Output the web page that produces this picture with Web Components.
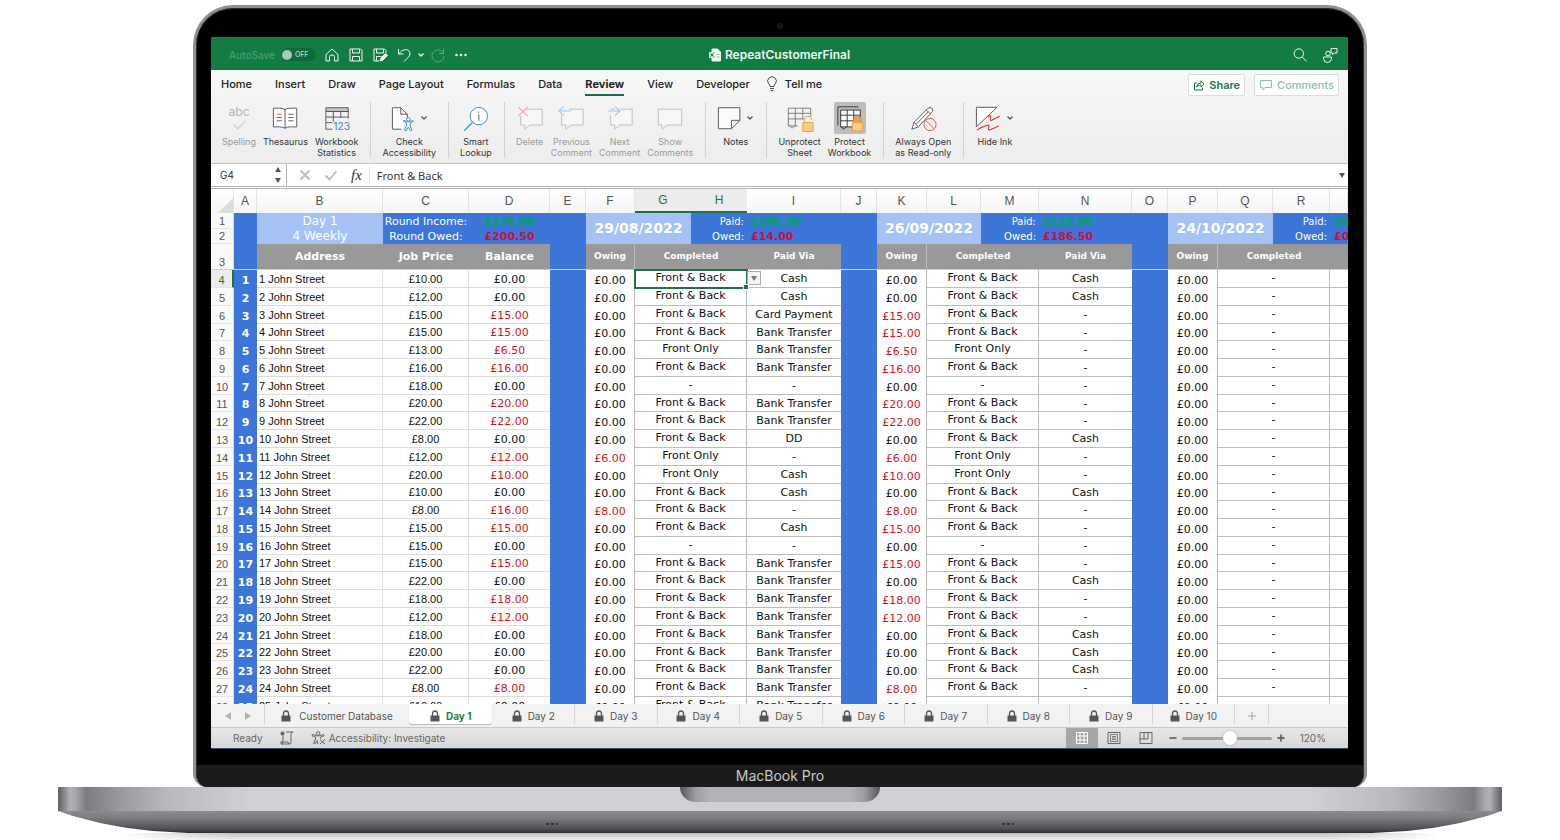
<!DOCTYPE html>
<html lang="en">
<head>
<meta charset="utf-8">
<title>RepeatCustomerFinal</title>
<style>
    body{
        margin:0;
        background-color:white;
        font-family:Inter,"Liberation Sans",sans-serif;
        overflow:hidden;
    }
</style>
</head>
<body>
<mac-book>
    <excel-window></excel-window>
</mac-book>

<script>
const ICONS={
    home:[16,16,'<path d="M2 7.500 8 2l6 5.500V14h-3.500V9.500q0-1.500-2.500-1.500t-2.500 1.500V14H2Z"/>'],
    save:[16,16,'<path d="M2 2h10.500L14 3.500V14H2ZM4.500 2v4h7V2M4.500 14V9.500h7V14"/>'],
    saveas:[16,16,'<path d="M7 14H2V2h10.500L14 3.500V6M4.500 2v4h7V2M4.500 14V9.500h5"/><path d="m8 14 .6-2.600 5-5 2 2-5 5Z" fill="currentColor"/>'],
    undo:[16,16,'<path d="M2.500 2v5h5M2.500 7Q6 2.500 9.500 2.500 14 3 14 7q-.2 2-2 3.500L8 14.500"/>'],
    redo:[16,16,'<path d="M13.500 2v4.500H9M13.500 6.500A6 6 0 1 0 14 9"/>'],
    caret:[8,8,'<path d="m1.500 2.500 2.500 2.500 2.500-2.500" stroke-width="1.400"/>'],
    dots:[14,6,'<g fill="currentColor" stroke="none"><circle cx="2.500" cy="3" r="1.300"/><circle cx="7" cy="3" r="1.300"/><circle cx="11.500" cy="3" r="1.300"/></g>'],
    file:[12,14,'<path d="M3 1h5.500L11.500 4v9H3Z" fill="currentColor"/><path d="M0 4h6v6H0Z" fill="#cfe6d8" stroke="none"/><path d="m1.500 5.500 3 3m0-3-3 3" stroke="#107c41"/><path d="M7.500 6.500h3m-3 2.500h3" stroke="#8cc3a2"/>'],
    search:[16,16,'<circle cx="6.800" cy="6.500" r="4.700"/><path d="m10.200 10 4.300 4.300"/>'],
    people:[18,18,'<circle cx="7" cy="7.500" r="2.300"/><path d="M2.500 11h8v1.500q-.5 4-4 4t-4-4Z"/><path d="M10 2.500h6V7h-2.500L11.500 8.500V7H10Z"/>'],
    bulb:[12,16,'<path d="M4 10.500Q4 9 2.700 7.800a4.300 4.300 0 1 1 6.600 0Q8 9 8 10.500ZM4 12.500h4M4.700 14.500h2.600" stroke-width=".8"/>'],
    share:[12,12,'<path d="M4 4H1.500v7h8V8.500"/><path d="M3.500 8q.5-4 4.500-4V1.800L11.200 5 8 8V6Q5 6 3.500 8Z"/>'],
    comment:[14,12,'<path d="M1.500 1.500h11v7H6L3.800 11V8.500H1.500Z"/>'],
    spelling:[28,30,'<text x="14" y="13" text-anchor="middle" font-size="13" fill="#b5b5b5" stroke="none">abc</text><path d="m8 22 4.500 4.500L21 18" stroke="#a9ddc9" stroke-width="1.200"/>'],
    book:[28,30,'<path d="M14 6Q12 4.500 8 4.500H1.500v20H8q4 0 6 1.500 2-1.500 6-1.500h6.500v-20H20q-4 0-6 1.500v20" fill="#fff"/><path d="M5 11h5.500" stroke="#e0623d"/><path d="M5 14.500h5.500M5 18h5.500M17.500 11H23m-5.500 3.500H23M17.500 18H23"/>'],
    stats:[28,30,'<path d="M2 4h24v4H2Z" fill="#c6c6c6"/><path d="M9 27H2V8h24v7.500M2 14h24M2 20h7M10 8v11M18 8v7" fill="none"/><text x="19" y="28" text-anchor="middle" font-size="11" fill="#3a87c8" stroke="none">123</text>'],
    access:[26,30,'<path d="M11 27H1.500V4h9l7 7v4M10.500 4v7h7" fill="#fff"/><g stroke="#2f86c9" fill="#fff"><circle cx="18.500" cy="16.500" r="2"/><path d="m13 18.500 3.500 1.800v3L14.500 28l1.500.8 2.500-4 2.500 4 1.500-.8-2-4.700v-3L24 18.500l-.8-1-3.200 1.500h-3L13.800 17.500Z"/></g>'],
    lookup:[30,30,'<circle cx="18" cy="13" r="9.300" fill="#fff" stroke="#3187c9"/><path d="m11.300 19.700-8.800 8.800" stroke="#3187c9" stroke-width="1.300"/><path d="M18 11v7m0-10v1.500"/>'],
    delete:[30,30,'<path d="M10 5.500h18v17H15L9.500 27v-4.500H5V13" fill="#f7f7f7"/><path d="m2.500 3 10 10m0-10-10 10" stroke="#f3a9a2" stroke-width="1.200"/>'],
    previous:[30,30,'<path d="M13 5.500h15v17H15L9.500 27v-4.500H5V12" fill="#f7f7f7"/><path d="M15 7.500H2M7.500 2.500 2 7.500l5.500 5" stroke="#9dcaf0" stroke-width="1.200"/>'],
    next:[30,30,'<path d="M16 5.500h12v17H15L9.500 27v-4.500H5V12M5 5.500h4" fill="#f7f7f7"/><path d="M2 7.500h13M9.500 2.500l5.500 5-5.500 5" stroke="#9dcaf0" stroke-width="1.200"/>'],
    show:[30,30,'<path d="M2.500 5.500h25v17H12L6.500 27v-4.500h-4Z" fill="#f7f7f7"/>'],
    notes:[26,30,'<path d="M1.500 4h23v13.500l-9 9h-14ZM24.500 17.500h-9v9" fill="#fbfbfb"/>'],
    unprotect:[30,30,'<path d="M2.500 4.500h24v9M2.500 4.500v19h10M2.500 10h24M2.500 16h16M2.500 22l4 4 3-3M10 4.500v19M18 4.500v12" stroke="#777" fill="none"/><path d="M19.500 20v-4q.5-3 4-3t4 4" stroke="#eb9a3c"/><path d="M18 20h11v9.500H18Z" fill="#fbd07c" stroke="#eb9a3c"/>'],
    protect:[30,30,'<path d="M2 23V3h22" /><path d="M5 6.500h21v18H5Z" fill="#fff"/><path d="M5 12h21M5 18h21M12 6.500v18M19 6.500v18M5 24.500 8.500 27l2.500-2.500"/><path d="M19 20v-3.500q.5-3.500 4-3.500t4 3.500V20" stroke="#e08e30" fill="#d6a66b"/><path d="M17.500 20h11v9h-11Z" fill="#fbd07c" stroke="#eb9a3c"/>'],
    pencil:[30,30,'<path d="m3 27 2.500-7.500L20.500 4.500q2-1.500 4 0 1.500 2 .3 3.800L10 24.500ZM18.500 6.500l4.500 4M5.500 19.500 10 24.500M21 8 8 21.500" fill="#fff"/><circle cx="22.500" cy="22" r="6.500" stroke="#e04a3f" fill="#f3f3f3"/><path d="m18 17.500 9 9" stroke="#e04a3f"/>'],
    ink:[28,30,'<path d="M1.500 3.500h22L1.500 24.500Z" fill="#fff"/><path d="M14 14q3-3 3 0-2 5 2 3l7.500-4M2 28q6-4 12-5.500 2 0 .5 3-1 3 2 2l9-4" stroke="#d8372a" stroke-width="1.200"/>'],
    cross:[12,12,'<path d="m1.500 1.500 9 9m0-9-9 9" stroke-width="1.800"/>'],
    tick:[14,12,'<path d="m1.500 6.500 4 4 7-8.500" stroke-width="1.800"/>'],
    lock:[10,12,'<path d="M2.500 6V3.500q.3-2.500 2.500-2.500t2.500 2.500V6" stroke-width="1.300"/><path d="M.5 5.500h9v6h-9Z" fill="currentColor" stroke="none"/>'],
    left:[8,10,'<path d="M7 1v8L1 5Z" fill="currentColor" stroke="none"/>'],
    right:[8,10,'<path d="M1 1v8l6-4Z" fill="currentColor" stroke="none"/>'],
    plus:[12,12,'<path d="M6 1v10M1 6h10"/>'],
    up:[8,6,'<path d="M4 0 7 5H1Z" fill="currentColor" stroke="none"/>'],
    down:[8,6,'<path d="M4 6 7 1H1Z" fill="currentColor" stroke="none"/>'],
    script:[16,14,'<path d="M4 3.500V11q0 2-2 2h8q2 0 2-2V3q0-2 2-2H7M3.500 13q-2 0-2-2H9q0 2 2 2"/><circle cx="3.500" cy="2.500" r="2" fill="currentColor" stroke="none"/>'],
    person:[16,14,'<circle cx="7" cy="2.500" r="1.800"/><path d="M7 13 6 9.500 4 13l-1.500-.7L4.500 8V6L1 4.800l.5-1.300 4 1.300h3l4-1.300.5 1.300L9.500 6v1.500M9 8.500l5 4.500m0-4.500L9 13"/>'],
    normal:[14,14,'<path d="M1.500 1.500h11v11h-11ZM1.500 5h11M1.500 9h11M5 1.500v11M9 1.500v11"/>'],
    page:[14,14,'<path d="M1 1.500h12v11H1Z"/><path d="M3.500 3.500h7v7h-7ZM5 5.500h4M5 7h4M5 8.500h4" stroke-width=".8"/>'],
    break:[14,14,'<path d="M1 1.500h12v11H1ZM1 8h8V1.500M5 8V1.500"/>'],
    minus:[8,10,'<path d="M.5 5h7" stroke-width="1.800"/>'],
    bigplus:[8,10,'<path d="M.5 5h7M4 1.500v7" stroke-width="1.800"/>']
};

// attach an open shadow root filled with the given markup
function fill(element,html){
    const template=document.createElement('template');
    template.innerHTML=html;
    const shadow=element.attachShadow({mode:'open'});
    shadow.appendChild(template.content.cloneNode(true));
    return shadow;
}

const buttonReset=`
    button,input{
        font:inherit;
        color:inherit;
        background:none;
        border:0;
        margin:0;
        padding:0;
    }
    button{
        display:inline-flex;
        align-items:center;
        justify-content:center;
    }
`;

class AppIcon extends HTMLElement{
    constructor(){
        super();
        const [width,height,shapes]=ICONS[this.getAttribute('name')];
        fill(this,`
<style>
    :host{
        display:inline-flex;
        flex:none;
    }
    svg{
        display:block;
        overflow:visible;
    }
</style>
<svg height="${this.getAttribute('height')||height}" viewBox="0 0 ${width} ${height}" fill="none" stroke="currentColor" stroke-linejoin="round" aria-hidden="true">${shapes}</svg>`);
    }
}

class MacBook extends HTMLElement{
    constructor(){
        super();
        fill(this,`
<style>
    :host{
        display:flex;
        flex-direction:column;
        box-sizing:border-box;
        height:100vh;
        padding:5px 58px 0;
    }
    .lid{
        flex:1;
        min-height:0;
        display:flex;
        flex-direction:column;
        margin:0 135px;
        border:3px solid #8f9095;
        border-bottom:0;
        border-radius:40px 40px 14px 14px;
        background-color:black;
        box-shadow:inset 0 0 0 1px #2c2d30;
    }
    .camera{
        flex:none;
        height:29px;
        display:flex;
        align-items:center;
        justify-content:center;
        box-sizing:border-box;
        padding-top:6px;
    }
    .camera::before{
        content:"";
        width:4px;
        height:4px;
        border-radius:50%;
        background-color:#101216;
        border:1px solid #1d1f23;
    }
    .screen{
        flex:1;
        min-height:0;
        display:flex;
        margin:0 16px 16px 15px;
        border-bottom:1px solid #34486d;
    }
    ::slotted(*){
        flex:1;
        min-width:0;
    }
    .chin{
        flex:none;
        height:22px;
        line-height:22px;
        margin:0 1px;
        text-align:center;
        font-size:14px;
        color:#c9c9c9;
        background-color:#1b1b1b;
        border-radius:0 0 11px 11px;
    }
    .deck{
        flex:none;
        display:flex;
        justify-content:center;
        height:24px;
        background:
            linear-gradient(90deg,#5f6064,#77787c 4px,#b0b1b6 12px,#aaabaf 17px,#7b7c81 28px,#97989d 60px,#b8b9be 110px,#cfd0d5 190px,transparent 240px),
            linear-gradient(270deg,#5f6064,#77787c 4px,#b0b1b6 12px,#aaabaf 17px,#7b7c81 28px,#97989d 60px,#b8b9be 110px,#cfd0d5 190px,transparent 240px),
            #cfd0d6;
    }
    .notch{
        width:200px;
        height:15px;
        border-radius:0 0 15px 15px;
        background:linear-gradient(90deg,#55565a,#9d9ea2 16px,#b1b2b7 30px,#b1b2b7 170px,#9d9ea2 184px,#55565a);
    }
    .under{
        flex:none;
        height:22px;
        display:flex;
        justify-content:center;
        align-items:center;
        gap:444px;
        background:linear-gradient(#8b8c90,#77787c 8px,#4d4e53 18px,#2c2d31);
        clip-path:polygon(0 0,100% 0,calc(100% - 15px) 5px,calc(100% - 42px) 12px,calc(100% - 69px) 17px,calc(100% - 95px) 20px,calc(100% - 130px) 22px,130px 22px,95px 20px,69px 17px,42px 12px,15px 5px);
    }
    .vent{
        width:12px;
        height:2px;
        margin-top:4px;
        border-radius:2px;
        background:repeating-linear-gradient(90deg,#333438 0 3px,#5c5d61 3px 5px);
    }
    .shade{
        flex:none;
        height:7px;
        margin:0 60px;
        background:linear-gradient(90deg,white,transparent 120px,transparent calc(100% - 120px),white),linear-gradient(#bcbcbc,#efefef);
    }
</style>
<div class="lid">
    <div class="camera"></div>
    <div class="screen"><slot></slot></div>
    <div class="chin">MacBook Pro</div>
</div>
<div class="deck"><div class="notch"></div></div>
<div class="under"><span class="vent"></span><span class="vent"></span></div>
<div class="shade"></div>`);
    }
}

class ExcelWindow extends HTMLElement{
    constructor(){
        super();
        fill(this,`
<style>
    :host{
        display:flex;
        flex-direction:column;
        background-color:white;
        color:#222;
    }
    sheet-grid{
        flex:1;
        min-height:0;
    }
</style>
<title-bar></title-bar>
<excel-ribbon></excel-ribbon>
<formula-bar></formula-bar>
<sheet-grid></sheet-grid>
<sheet-tabs></sheet-tabs>
<status-bar></status-bar>`);
    }
}

class TitleBar extends HTMLElement{
    constructor(){
        super();
        fill(this,`
<style>
    ${buttonReset}
    :host{
        display:grid;
        grid-template-columns:1fr auto 1fr;
        align-items:center;
        flex:none;
        height:33px;
        padding:0 9px;
        background-color:#127c42;
        color:#eef8f2;
    }
    .quick,.title,.right,label{
        display:flex;
        align-items:center;
    }
    .quick{
        gap:8px;
        padding:2px 0 0 9px;
    }
    label{
        gap:6px;
        font-size:10px;
        font-weight:500;
        color:#4c9c70;
    }
    input{
        appearance:none;
        display:flex;
        align-items:center;
        width:35px;
        height:13px;
        border-radius:7px;
        background-color:#0e6a38;
        color:#b5d6c4;
        font-size:7px;
    }
    input::before{
        content:"";
        width:10px;
        height:10px;
        margin:0 3px 0 1px;
        border-radius:50%;
        background-color:#a5ccb6;
    }
    input::after{
        content:"OFF";
    }
    .faded{
        color:#5fa880;
    }
    .caret{
        margin:0 -3px;
    }
    .title{
        gap:4px;
        font-size:12px;
        font-weight:600;
        padding-top:2px;
    }
    h1{
        font:inherit;
        margin:0;
    }
    .right{
        justify-content:flex-end;
        gap:13px;
        padding-top:2px;
    }
</style>
<div class="quick">
    <label>AutoSave<input type="checkbox" aria-label="AutoSave"></label>
    <button aria-label="Home"><app-icon name="home"></app-icon></button>
    <button aria-label="Save"><app-icon name="save"></app-icon></button>
    <button aria-label="Save as"><app-icon name="saveas"></app-icon></button>
    <button aria-label="Undo"><app-icon name="undo"></app-icon></button>
    <button class="caret" aria-label="Undo list"><app-icon name="caret"></app-icon></button>
    <button class="faded" aria-label="Redo"><app-icon name="redo"></app-icon></button>
    <button aria-label="More"><app-icon name="dots"></app-icon></button>
</div>
<div class="title"><app-icon name="file"></app-icon><h1>RepeatCustomerFinal</h1></div>
<div class="right">
    <button aria-label="Search"><app-icon name="search"></app-icon></button>
    <button aria-label="Account"><app-icon name="people"></app-icon></button>
</div>`);
    }
}

class RibbonButton extends HTMLElement{
    constructor(){
        super();
        fill(this,`
<style>
    ${buttonReset}
    :host{
        display:block;
        font-size:9px;
        line-height:11px;
        color:#333;
    }
    :host([disabled]){
        color:#9a9a9a;
    }
    button{
        flex-direction:column;
        justify-content:flex-start;
        gap:2px;
    }
    .icon{
        display:flex;
        align-items:center;
        justify-content:center;
        gap:5px;
        height:32px;
        color:#555;
        border-radius:2px;
    }
    :host([disabled]) .icon{
        color:#bbb;
    }
    :host([pressed]) .icon{
        width:32px;
        background-color:#bdbdbd;
        color:#333;
    }
    .label{
        text-align:center;
        white-space:pre-line;
    }
</style>
<button>
    <span class="icon"><app-icon name="${this.getAttribute('icon')}" height="28"></app-icon>${this.hasAttribute('menu')?'<app-icon name="caret"></app-icon>':''}</span>
    <span class="label"><slot></slot></span>
</button>`);
        this.shadowRoot.querySelector('button').disabled=this.hasAttribute('disabled');
    }
}

class ExcelRibbon extends HTMLElement{
    constructor(){
        super();
        fill(this,`
<style>
    ${buttonReset}
    :host{
        display:block;
        flex:none;
        height:93px;
        background:linear-gradient(#f7f7f7,#ededed);
    }
    .top,nav,.tools,.actions,.group{
        display:flex;
    }
    .top{
        height:28px;
        justify-content:space-between;
        padding:0 9px 0 10px;
    }
    nav{
        gap:23px;
        font-size:11px;
        font-weight:500;
    }
    nav button{
        height:26px;
        box-sizing:border-box;
        padding-top:3px;
        border-bottom:2px solid transparent;
    }
    nav .active{
        font-weight:700;
        border-color:#1e6b43;
    }
    .tell{
        gap:7px;
        margin-left:-7px;
    }
    .actions{
        gap:9px;
        padding-top:4px;
        font-size:11px;
        font-weight:600;
        color:#1f7246;
    }
    .actions button{
        height:22px;
        box-sizing:border-box;
        gap:4px;
        padding:0 4px;
        border:1px solid #dcdcdc;
        border-radius:2px;
        background-color:white;
    }
    .actions .off{
        color:#93bda6;
        font-weight:500;
    }
    .tools{
        padding:4px 11px 0;
    }
    .group{
        gap:7px;
        height:56px;
        padding-right:12px;
        margin-right:11px;
        border-right:1px solid #d3d3d3;
    }
    .group:last-child{
        border:0;
    }
</style>
<div class="top">
    <nav>
        <button>Home</button>
        <button>Insert</button>
        <button>Draw</button>
        <button>Page Layout</button>
        <button>Formulas</button>
        <button>Data</button>
        <button class="active">Review</button>
        <button>View</button>
        <button>Developer</button>
        <button class="tell"><app-icon name="bulb"></app-icon>Tell me</button>
    </nav>
    <div class="actions">
        <button><app-icon name="share"></app-icon>Share</button>
        <button class="off"><app-icon name="comment"></app-icon>Comments</button>
    </div>
</div>
<div class="tools">
    <div class="group">
        <ribbon-button icon="spelling" disabled>Spelling</ribbon-button>
        <ribbon-button icon="book">Thesaurus</ribbon-button>
        <ribbon-button icon="stats">Workbook\nStatistics</ribbon-button>
    </div>
    <div class="group"><ribbon-button icon="access" menu>Check\nAccessibility</ribbon-button></div>
    <div class="group"><ribbon-button icon="lookup">Smart\nLookup</ribbon-button></div>
    <div class="group">
        <ribbon-button icon="delete" disabled>Delete</ribbon-button>
        <ribbon-button icon="previous" disabled>Previous\nComment</ribbon-button>
        <ribbon-button icon="next" disabled>Next\nComment</ribbon-button>
        <ribbon-button icon="show" disabled>Show\nComments</ribbon-button>
    </div>
    <div class="group"><ribbon-button icon="notes" menu>Notes</ribbon-button></div>
    <div class="group">
        <ribbon-button icon="unprotect">Unprotect\nSheet</ribbon-button>
        <ribbon-button icon="protect" pressed>Protect\nWorkbook</ribbon-button>
    </div>
    <div class="group"><ribbon-button icon="pencil">Always Open\nas Read-only</ribbon-button></div>
    <div class="group"><ribbon-button icon="ink" menu>Hide Ink</ribbon-button></div>
</div>`);
    }
}

class FormulaBar extends HTMLElement{
    constructor(){
        super();
        fill(this,`
<style>
    ${buttonReset}
    :host{
        display:flex;
        align-items:center;
        flex:none;
        box-sizing:border-box;
        height:26px;
        border-top:1px solid #c4c4c4;
        border-bottom:3px double #b5b5b5;
        color:#333;
    }
    .name{
        display:flex;
        align-items:center;
        box-sizing:border-box;
        width:76px;
        height:22px;
        padding:0 4px 0 9px;
        border-right:1px solid #b5b5b5;
        font-size:10px;
    }
    .name input{
        flex:1;
        min-width:0;
    }
    .steps{
        display:flex;
        flex-direction:column;
        gap:4px;
        color:#555;
    }
    .edit{
        display:flex;
        align-items:center;
        gap:13px;
        padding:0 7px 0 12px;
        border-right:1px solid #dedede;
        color:#bbb;
    }
    .fx{
        font:italic 15px "Liberation Serif",serif;
        color:#333;
    }
    .formula{
        flex:1;
        min-width:0;
        padding-left:7px;
        font-family:"Noto Sans",sans-serif;
        font-size:11px;
    }
    .more{
        padding-right:2px;
        color:#555;
    }
</style>
<div class="name">
    <input value="G4" aria-label="Name box">
    <span class="steps">
        <button aria-label="Up"><app-icon name="up"></app-icon></button>
        <button aria-label="Down"><app-icon name="down"></app-icon></button>
    </span>
</div>
<div class="edit">
    <button aria-label="Cancel"><app-icon name="cross"></app-icon></button>
    <button aria-label="Enter"><app-icon name="tick"></app-icon></button>
    <button class="fx">fx</button>
</div>
<input class="formula" value="Front &amp; Back" aria-label="Formula">
<button class="more" aria-label="Expand"><app-icon name="down"></app-icon></button>`);
    }
}

const FB='Front & Back';
const FO='Front Only';
const BT='Bank Transfer';

// job price, balance, then owing / completed / paid via of both visits
const JOBS=[
    [10,0,0,FB,'Cash',0,FB,'Cash'],
    [12,0,0,FB,'Cash',0,FB,'Cash'],
    [15,15,0,FB,'Card Payment',15,FB,'-'],
    [15,15,0,FB,BT,15,FB,'-'],
    [13,6.5,0,FO,BT,6.5,FO,'-'],
    [16,16,0,FB,BT,16,FB,'-'],
    [18,0,0,'-','-',0,'-','-'],
    [20,20,0,FB,BT,20,FB,'-'],
    [22,22,0,FB,BT,22,FB,'-'],
    [8,0,0,FB,'DD',0,FB,'Cash'],
    [12,12,6,FO,'-',6,FO,'-'],
    [20,10,0,FO,'Cash',10,FO,'-'],
    [10,0,0,FB,'Cash',0,FB,'Cash'],
    [8,16,8,FB,'-',8,FB,'-'],
    [15,15,0,FB,'Cash',15,FB,'-'],
    [15,0,0,'-','-',0,'-','-'],
    [15,15,0,FB,BT,15,FB,'-'],
    [22,0,0,FB,BT,0,FB,'Cash'],
    [18,18,0,FB,BT,18,FB,'-'],
    [12,12,0,FB,BT,12,FB,'-'],
    [18,0,0,FB,BT,0,FB,'Cash'],
    [20,0,0,FB,BT,0,FB,'Cash'],
    [22,0,0,FB,BT,0,FB,'Cash'],
    [8,8,0,FB,BT,8,FB,'-'],
    [10,0,0,FB,BT,0,'-','-']
];
const VISITS=[
    ['29/08/2022','£306.50','£14.00'],
    ['26/09/2022','£122.00','£186.50'],
    ['24/10/2022','£0.00','£0.00']
];
const WIDTHS=[23,23,126,86,81,36,49,56,56,94,36,50,54,58,93,36,50,55,57];

class SheetGrid extends HTMLElement{
    constructor(){
        super();
        fill(this,`
<style>
    ${buttonReset}
    :host{
        display:block;
        overflow:hidden;
        font-family:"DejaVu Sans",sans-serif;
        font-size:11px;
        line-height:15px;
        color:#111;
    }
    table{
        table-layout:fixed;
        width:100%;
        border-collapse:separate;
        border-spacing:0;
    }
    th,td{
        padding:0;
        text-align:center;
        white-space:nowrap;
        overflow:hidden;
        box-sizing:border-box;
        font-weight:400;
    }
    .letters th{
        height:24px;
        font-family:"Liberation Sans",sans-serif;
        font-size:12px;
        color:#555;
        background:linear-gradient(white,#f5f5f5);
        border-right:1px solid #e4e4e4;
    }
    .letters .on{
        color:#1f7246;
        background:#ececec;
        border-bottom:2px solid #1f7246;
        border-right:0;
    }
    .letters .corner{
        text-align:right;
        vertical-align:bottom;
    }
    .corner::after{
        content:"";
        display:inline-block;
        border-left:15px solid transparent;
        border-bottom:15px solid #dcdcdc;
        vertical-align:bottom;
    }
    .num{
        font-family:"Liberation Sans",sans-serif;
        line-height:14px;
        color:#555;
        background-color:#fafafa;
        border-right:1px solid #ddd;
        border-bottom:1px solid #e4e4e4;
        vertical-align:bottom;
    }
    .num.on{
        color:#1f7246;
        background-color:#ececec;
        border-right:2px solid #1f7246;
    }
    .r1 > *{height:16px}
    .r2 > *{height:15px}
    .r3 > *{
        height:26px;
        border-bottom:1px solid #cfcfcf;
    }
    .blue{
        background-color:#3c76d9;
        color:white;
    }
    .pale{
        background-color:#a5c2f5;
        color:white;
    }
    .day{
        font-size:12px;
    }
    .date{
        font-size:14px;
        font-weight:700;
    }
    .sum{
        text-align:right;
        padding-right:3px;
        font-size:10px;
    }
    .paid,.owed{
        font-weight:700;
        color:#00a650;
    }
    .owed{
        color:#c8103c;
    }
    .left{
        text-align:left;
        padding-left:4px;
    }
    .r3 .grey{
        background-color:#999;
        color:white;
        font-weight:700;
    }
    .r3 .small{
        font-size:9px;
    }
    .r3 .rule{
        border-right:1px solid #bbb;
    }
    tbody td,tbody th{
        height:18px;
    }
    /* two rows in nine are one pixel shorter */
    tbody tr:nth-child(9n+4) > *,
    tbody tr:nth-child(9n+8) > *{
        height:17px;
    }
    .index{
        font-weight:700;
        vertical-align:bottom;
    }
    .address,.price,.balance{
        vertical-align:bottom;
        border-bottom:1px solid #dcdcdc;
        border-right:1px solid #dcdcdc;
    }
    .address,.price{
        font-family:"Liberation Sans",sans-serif;
    }
    .address{
        text-align:left;
        padding-left:2px;
    }
    .balance{
        border-right:0;
    }
    .owing{
        vertical-align:bottom;
        border-right:1px solid #bdbdbd;
    }
    .done,.via{
        vertical-align:top;
        border-bottom:1px solid #bdbdbd;
        border-right:1px solid #bdbdbd;
    }
    .via{
        vertical-align:middle;
        border-right:0;
    }
    .due{
        color:#d0161b;
    }
    /* the selected cell, its fill handle and its list button lie over the cells around it */
    .selected{
        position:relative;
        overflow:visible;
        outline:2px solid #1f7246;
        outline-offset:-1px;
    }
    .selected::after{
        content:"";
        position:absolute;
        right:-3px;
        bottom:-3px;
        width:4px;
        height:4px;
        background-color:#1f7246;
        border:1px solid white;
    }
    .selected button{
        position:absolute;
        left:calc(100% + 1px);
        top:1px;
        width:14px;
        height:14px;
        border:1px solid #aaa;
        background-color:#f4f4f4;
        color:#777;
    }
</style>
<table>
    <colgroup>${WIDTHS.map(width=>`<col style="width:${width}px">`).join('')}<col></colgroup>
    <thead>
        ${this.letters()}
        ${this.summary()}
    </thead>
    <tbody>${JOBS.map((job,index)=>this.row(job,index+1)).join('')}</tbody>
</table>`);
    }

    letters(){
        const cells=[...'ABCDEFGHIJKLMNOPQR'].map(letter=>`<th${'GH'.includes(letter)?' class="on"':''}>${letter}</th>`);
        return `<tr class="letters"><th class="corner"></th>${cells.join('')}<th></th></tr>`;
    }

    summary(){
        const gap='<td class="blue"></td>';
        let first='<th class="num">1</th>'+gap+'<td class="pale day">Day 1</td><td class="blue">Round Income:</td><td class="blue paid">£376.00</td>'+gap;
        let second='<th class="num">2</th>'+gap+'<td class="pale day">4 Weekly</td><td class="blue">Round Owed:</td><td class="blue owed">£200.50</td>'+gap;
        let third='<th class="num">3</th>'+gap+'<th class="grey">Address</th><th class="grey">Job Price</th><th class="grey">Balance</th>'+gap;
        VISITS.forEach(([date,paid,owed],index)=>{
            const last=index===VISITS.length-1;
            first+=`<td class="pale date" colspan="2" rowspan="2">${date}</td><td class="blue sum">Paid:</td><td class="blue paid left">${paid}</td>${last?'':gap}`;
            second+=`<td class="blue sum">Owed:</td><td class="blue owed left">${owed}</td>${last?'':gap}`;
            third+=`<th class="grey small rule">Owing</th><th class="grey small" colspan="2">Completed</th><th class="grey small">${last?'':'Paid Via'}</th>${last?'':gap}`;
        });
        return `<tr class="r1">${first}</tr><tr class="r2">${second}</tr><tr class="r3">${third}</tr>`;
    }

    money(value,name){
        return `<td class="${name}${value>0&&name!=='price'?' due':''}">£${value.toFixed(2)}</td>`;
    }

    row([price,balance,owing1,done1,via1,owing2,done2,via2],number){
        const gap='<td class="blue"></td>';
        const escape=text=>text.replace('&','&amp;');
        const selected=number===1;
        return `<tr>
            <th class="num${selected?' on':''}">${number+3}</th>
            <td class="blue index">${number}</td>
            <td class="address">${number} John Street</td>
            ${this.money(price,'price')}${this.money(balance,'balance')}${gap}
            ${this.money(owing1,'owing')}
            <td class="done${selected?' selected':''}" colspan="2">${escape(done1)}${selected?'<button aria-label="Pick from list"><app-icon name="down"></app-icon></button>':''}</td>
            <td class="via">${via1}</td>${gap}
            ${this.money(owing2,'owing')}
            <td class="done" colspan="2">${escape(done2)}</td><td class="via">${via2}</td>${gap}
            ${this.money(0,'owing')}<td class="done" colspan="2">-</td><td class="via"></td>
        </tr>`;
    }
}

class SheetTabs extends HTMLElement{
    constructor(){
        super();
        const days=[1,2,3,4,5,6,7,8,9,10];
        fill(this,`
<style>
    ${buttonReset}
    :host{
        display:flex;
        flex:none;
        height:23px;
        background-color:#f2f2f2;
        padding-right:79px;
        font-size:10px;
        color:#555;
    }
    .move{
        display:flex;
        justify-content:center;
        gap:12px;
        width:53px;
        color:#b3b3b3;
    }
    .tab,.add{
        box-sizing:border-box;
        height:20px;
        padding-top:3px;
        border-left:1px solid #d6d6d6;
    }
    .tab{
        flex:1 1 0;
        gap:6px;
    }
    .wide{
        flex:none;
        width:145px;
        gap:8px;
    }
    .active{
        background-color:white;
        color:#1f8046;
        font-weight:700;
        border-left-color:transparent;
        border-radius:0 0 3px 3px;
        box-shadow:0 1px 1px #b5b5b5;
    }
    .active app-icon{
        color:#555;
    }
    .active + .tab{
        border-left-color:transparent;
    }
    .add{
        width:35px;
        border-right:1px solid #d6d6d6;
        color:#999;
    }
</style>
<div class="move">
    <button aria-label="Previous sheets"><app-icon name="left"></app-icon></button>
    <button aria-label="Next sheets"><app-icon name="right"></app-icon></button>
</div>
<button class="tab wide"><app-icon name="lock"></app-icon>Customer Database</button>
${days.map(day=>`<button class="tab${day===1?' active':''}"><app-icon name="lock"></app-icon>Day ${day}</button>`).join('')}
<button class="add" aria-label="New sheet"><app-icon name="plus" height="10"></app-icon></button>`);
    }
}

class StatusBar extends HTMLElement{
    constructor(){
        super();
        fill(this,`
<style>
    ${buttonReset}
    :host{
        display:flex;
        justify-content:space-between;
        flex:none;
        box-sizing:border-box;
        height:21px;
        padding:0 22px;
        border-top:1px solid #c8c8c8;
        background:linear-gradient(#e6e6e6,#d8d8d8);
        font-size:10px;
        color:#666;
    }
    .info,.views,.zoom{
        display:flex;
        align-items:center;
    }
    .info{
        gap:16px;
    }
    .info button{
        gap:2px;
    }
    .views > button{
        width:32px;
        height:20px;
    }
    .views > .active{
        background-color:#a6a6a6;
        color:white;
    }
    .zoom{
        gap:5px;
        padding-left:7px;
    }
    .zoom input{
        appearance:none;
        width:90px;
        height:18px;
    }
    .zoom input::-webkit-slider-runnable-track{
        height:3px;
        border-radius:2px;
        background-color:#a2a2a2;
    }
    .zoom input::-webkit-slider-thumb{
        appearance:none;
        width:14px;
        height:14px;
        margin-top:-6px;
        border-radius:50%;
        background-color:white;
        box-shadow:0 0 2px #999;
    }
    output{
        margin-left:10px;
    }
</style>
<div class="info">
    <span>Ready</span>
    <button aria-label="Record macro"><app-icon name="script"></app-icon></button>
    <button><app-icon name="person"></app-icon>Accessibility: Investigate</button>
</div>
<div class="views">
    <button class="active" aria-label="Normal view"><app-icon name="normal"></app-icon></button>
    <button aria-label="Page layout view"><app-icon name="page"></app-icon></button>
    <button aria-label="Page break view"><app-icon name="break"></app-icon></button>
    <div class="zoom">
        <button aria-label="Zoom out"><app-icon name="minus"></app-icon></button>
        <input type="range" min="0" max="100" value="54" aria-label="Zoom">
        <button aria-label="Zoom in"><app-icon name="bigplus"></app-icon></button>
        <output>120%</output>
    </div>
</div>`);
    }
}

customElements.define('app-icon',AppIcon);
customElements.define('mac-book',MacBook);
customElements.define('title-bar',TitleBar);
customElements.define('ribbon-button',RibbonButton);
customElements.define('excel-ribbon',ExcelRibbon);
customElements.define('formula-bar',FormulaBar);
customElements.define('sheet-grid',SheetGrid);
customElements.define('sheet-tabs',SheetTabs);
customElements.define('status-bar',StatusBar);
customElements.define('excel-window',ExcelWindow);
</script>
</body>
</html>
